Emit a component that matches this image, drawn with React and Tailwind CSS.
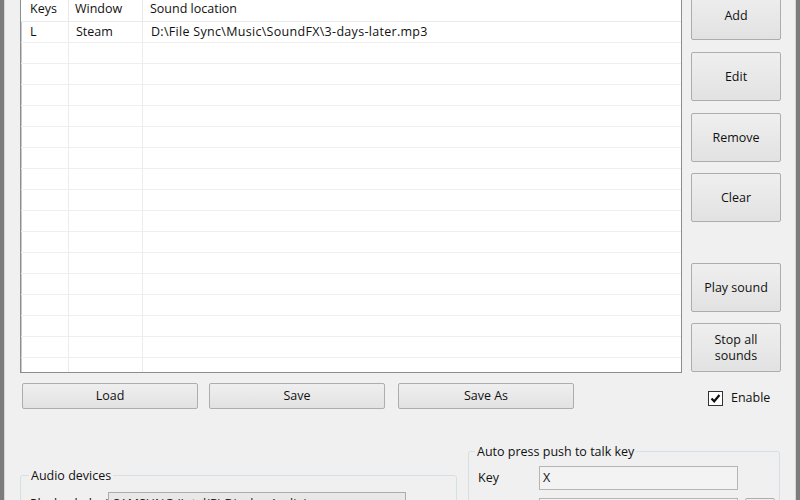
import React from "react";

const font = { fontFamily: '"Open Sans", "Noto Sans", "Liberation Sans", sans-serif' };

function Btn({ children, className = "" }) {
  return (
    <div
      className={
        "flex items-center justify-center text-center leading-[16px] border border-[#adadad] rounded-[2px] bg-gradient-to-b from-[#efefef] to-[#e2e2e2] text-[#111] " +
        className
      }
    >
      {children}
    </div>
  );
}

const rows = Array.from({ length: 17 });

export default function App() {
  return (
    <div
      className="w-[800px] h-[500px] overflow-hidden bg-[#f0f0f0] flex text-[12.5px] text-[#111]"
      style={font}
    >
      {/* left window edge */}
      <div className="w-[4px] shrink-0 bg-[#7c7c7c]" />
      <div className="w-[1px] shrink-0 bg-[#d6d6d6]" />

      <div className="flex-1 flex flex-col">
        {/* top section */}
        <div className="flex items-start -mt-[5px]">
          {/* list view */}
          <div className="ml-[15px] w-[662px] h-[378px] border border-[#8a8d92] bg-white flex overflow-hidden shadow-[inset_1px_1px_0_#c8c8c8]">
            <div className="flex-1 flex flex-col">
              {/* header */}
              <div className="h-[26px] shrink-0 flex border-b border-[#eaeaea] bg-white">
                <div className="w-[48px] pl-[9px] pt-[4px] border-r border-[#e8e8e8]">Keys</div>
                <div className="w-[74px] pl-[6px] pt-[4px] border-r border-[#e8e8e8]">Window</div>
                <div className="flex-1 pl-[7px] pt-[4px]">Sound location</div>
              </div>
              {/* body */}
              <div className="flex-1 relative">
                <div className="flex flex-col">
                  <div className="h-[21px] flex items-center border-b border-[#efefef]">
                    <div className="w-[48px] pl-[9px]">L</div>
                    <div className="w-[74px] pl-[7px]">Steam</div>
                    <div className="flex-1 pl-[8px] tracking-[0.3px]">D:\File Sync\Music\SoundFX\3-days-later.mp3</div>
                  </div>
                  {rows.map((_, i) => (
                    <div key={i} className="h-[21px] border-b border-[#efefef]" />
                  ))}
                </div>
                {/* column lines */}
                <div className="absolute inset-0 flex pointer-events-none">
                  <div className="w-[48px] border-r border-[#ececec]" />
                  <div className="w-[74px] border-r border-[#ececec]" />
                </div>
              </div>
            </div>
          </div>

          {/* right buttons */}
          <div className="ml-[9px] -mt-[4px] w-[90px] flex flex-col">
            <Btn className="h-[49px]">Add</Btn>
            <Btn className="h-[49px] mt-[12px]">Edit</Btn>
            <Btn className="h-[49px] mt-[12px]">Remove</Btn>
            <Btn className="h-[49px] mt-[11px]">Clear</Btn>
            <Btn className="h-[49px] mt-[41px]">Play sound</Btn>
            <Btn className="h-[49px] mt-[11px]">
              Stop all
              <br />
              sounds
            </Btn>
          </div>
        </div>

        {/* bottom buttons row */}
        <div className="flex items-center mt-[10px] h-[26px]">
          <Btn className="ml-[17px] w-[176px] h-[26px]">Load</Btn>
          <Btn className="ml-[11px] w-[176px] h-[26px]">Save</Btn>
          <Btn className="ml-[13px] w-[176px] h-[26px]">Save As</Btn>
          <div className="ml-[134px] mt-[4px] flex items-center">
            <div className="w-[15px] h-[15px] border border-[#333] bg-white flex items-center justify-center">
              <svg width="11" height="11" viewBox="0 0 11 11">
                <path d="M1.5 5.5 L4.2 8.3 L9.5 2" fill="none" stroke="#111" strokeWidth="2.2" />
              </svg>
            </div>
            <span className="ml-[8px]">Enable</span>
          </div>
        </div>

        {/* group boxes */}
        <div className="flex items-start mt-[34px]">
          <fieldset className="ml-[15px] mt-[24px] w-[437px] h-[80px] border border-[#d5dfe5] rounded-[3px] shrink-0">
            <legend className="ml-[8px] px-[2px] leading-[17px]">Audio devices</legend>
            <div className="flex items-start mt-[8px]">
              <div className="w-[87px] pl-[9px] pt-[3px] whitespace-nowrap overflow-hidden leading-[17px]">Playback device</div>
              <div className="w-[298px] h-[23px] border border-[#acacac] bg-[#e8e8e8] pl-[4px] leading-[21px] text-[#222] whitespace-nowrap overflow-hidden">
                SAMSUNG (Intel(R) Display Audio)
              </div>
            </div>
          </fieldset>

          <fieldset className="ml-[11px] w-[312px] h-[100px] border border-[#d5dfe5] rounded-[3px] shrink-0">
            <legend className="ml-[6px] px-[2px] leading-[17px]">Auto press push to talk key</legend>
            <div className="flex items-center mt-[6px]">
              <div className="w-[70px] pl-[9px]">Key</div>
              <div className="w-[199px] h-[24px] border border-[#b5b5b5] bg-[#f3f3f3] pl-[3px] leading-[22px]">X</div>
            </div>
            <div className="flex items-center mt-[8px]">
              <div className="w-[70px]" />
              <div className="w-[199px] h-[24px] border border-[#b5b5b5] bg-[#f3f3f3]" />
              <Btn className="ml-[7px] w-[30px] h-[24px]"> </Btn>
            </div>
          </fieldset>
        </div>
      </div>

      {/* right window edge */}
      <div className="w-[1px] shrink-0 bg-[#d6d6d6]" />
      <div className="w-[4px] shrink-0 bg-[#7c7c7c]" />
    </div>
  );
}
